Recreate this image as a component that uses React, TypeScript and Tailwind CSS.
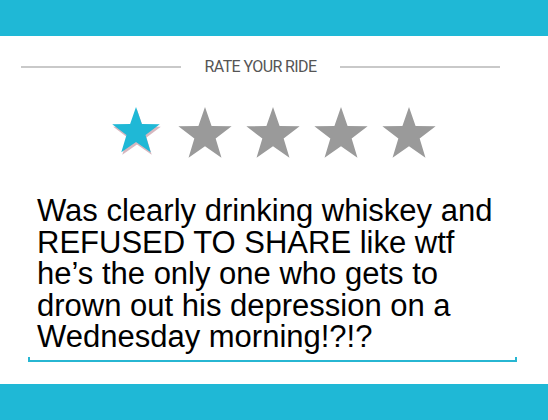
import React from 'react';

const STAR = 'M50 0 L61.76 33.82 L97.55 34.55 L69.02 56.18 L79.4 90.45 L50 70 L20.6 90.45 L30.98 56.18 L2.45 34.55 L38.24 33.82 Z';

function Star({ active }: { active?: boolean }) {
  if (active) {
    return (
      <svg width="52" height="50" viewBox="0 0 104 100" className="overflow-visible">
        <path d={STAR} fill="#d7b7bf" transform="translate(2 5)" />
        <path d={STAR} fill="#1fb8d6" />
      </svg>
    );
  }
  return (
    <svg width="56" height="53" viewBox="0 0 100 91" className="blur-[0.5px]">
      <path d={STAR} fill="#9a9a9a" />
    </svg>
  );
}

const lines = [
  'Was clearly drinking whiskey and',
  'REFUSED TO SHARE like wtf',
  'he’s the only one who gets to',
  'drown out his depression on a',
  'Wednesday morning!?!?',
];

export default function App() {
  const rating = 1;

  return (
    <div className="w-[548px] h-[420px] bg-white flex flex-col overflow-hidden">
      <div className="h-9 bg-[#1fb8d6]" />

      {/* Header */}
      <div className="pt-[22px] flex items-center h-[40px] pl-[21px]">
        <div className="w-[160px] h-[2px] bg-[#c9c9c9]" />
        <div className="w-[159px] text-center text-[16px] text-[#555] font-['Roboto',sans-serif] tracking-[-0.6px] leading-[18px]">
          RATE YOUR RIDE
        </div>
        <div className="w-[160px] h-[2px] bg-[#c9c9c9]" />
      </div>

      {/* Stars */}
      <div className="mt-[28px] h-[56px] flex items-center justify-center pr-[2px]">
        {[1, 2, 3, 4, 5].map((i) => (
          <div key={i} className="w-[68px] flex items-center justify-center">
            <Star active={i <= rating} />
          </div>
        ))}
      </div>

      {/* Review */}
      <p className="mt-[35px] pl-[37px] text-[31px] leading-[31.5px] text-black font-['Liberation_Sans',Arial,sans-serif] whitespace-nowrap">
        {lines.map((l) => (
          <span key={l} className="block">{l}</span>
        ))}
      </p>
      <div className="mt-[4.5px] ml-[28px] mr-[31px] h-[5px] border-x-2 border-b-2 border-[#27b6d2]" />

      <div className="mt-auto h-9 bg-[#1fb8d6]" />
    </div>
  );
}
